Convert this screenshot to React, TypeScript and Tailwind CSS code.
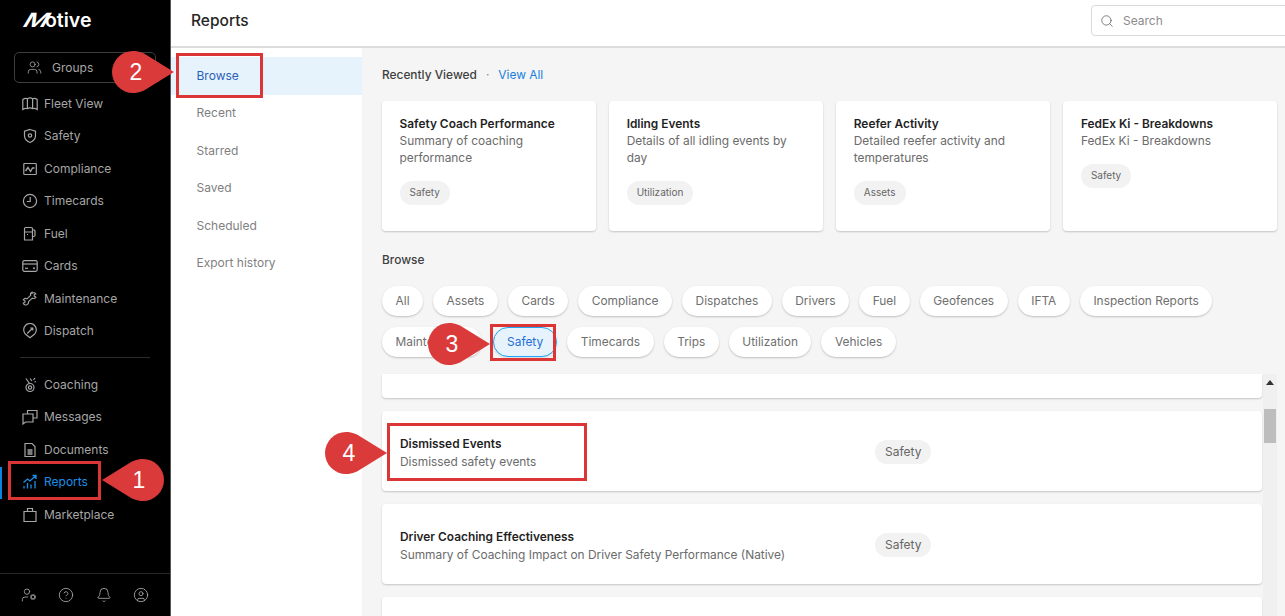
import { Bell, CircleHelp, CircleUser, Search, UserCog, Users } from 'lucide-react';
import type { ReactNode } from 'react';

const Svg = ({ children, w = 1.2 }: { children: ReactNode; w?: number }) => (
  <svg width="16" height="16" viewBox="0 0 16 16" fill="none" stroke="currentColor" strokeWidth={w}>
    {children}
  </svg>
);

const IconMap = () => (
  <Svg>
    <path d="M.8 3.500c1.400-1 3-1.300 4.600-.8 1.700-1 3.500-1 5.200 0 1.600-.5 3.200-.2 4.600.8v10c-1.400-1-3-1.300-4.600-.8-1.700-1-3.500-1-5.200 0-1.600-.5-3.200-.2-4.600.8z" />
    <path d="M5.400 2.700v10M10.600 2.700v10" />
  </Svg>
);

const IconShield = () => (
  <Svg>
    <path d="M8 1.500 13.500 3.200v4.600c0 3.200-2.400 5.400-5.500 6.700-3.100-1.300-5.500-3.500-5.500-6.700V3.200z" />
    <circle cx="8" cy="7.500" r="1.700" />
  </Svg>
);

const IconCompliance = () => (
  <Svg>
    <rect x="1.800" y="2.500" width="12.500" height="11" rx=".8" />
    <path d="M3.500 10 6 6.500l2.500 4 2-3.500h2" strokeWidth="1.400" />
  </Svg>
);

const IconClock = () => (
  <Svg>
    <circle cx="8" cy="8" r="6.600" />
    <path d="M8.200 4v4.500H4.800" />
  </Svg>
);

const IconFuel = () => (
  <Svg>
    <path d="M2.500 14V2.800c0-.8.500-1.300 1.300-1.300h5.400c.8 0 1.300.5 1.300 1.300V14z" />
    <path d="M2.500 6h8M5 8.500h1M10.500 10.500h1.300c.8 0 1.200-.5 1.200-1.200V5L11.500 3.500" />
  </Svg>
);

const IconCard = () => (
  <Svg>
    <rect x=".8" y="2.700" width="14.400" height="10.600" rx="1.500" />
    <path d="M.8 6h14.400" />
    <path d="M3 10.300h3" />
    <circle cx="12" cy="10.300" r="1" fill="currentColor" stroke="none" />
  </Svg>
);

const IconWrench = () => (
  <Svg w={1.1}>
    <path d="M10 1.200c-1.300.6-1.800 2-1.300 3.200L4.900 7.800c-1.200-.6-2.800-.3-3.600 1l1.800 1.200-.3 1.500-1.600.5c.5 1.500 2.100 2.300 3.600 1.800 1.300-.5 2-1.800 1.700-3.100l3.800-3.500c1.300.6 2.800.2 3.600-1l-1.800-1.200.3-1.600 1.500-.5c-.6-1.200-2.500-1.500-3.900-.7z" />
  </Svg>
);

const IconDispatch = () => (
  <Svg>
    <path d="M8 14.800 3.300 11A6.300 6.300 0 1 1 12.700 11z" />
    <path d="M5.300 10.500 10.800 5M8.200 5h2.600v2.600" />
  </Svg>
);

const IconCoaching = () => (
  <Svg>
    <circle cx="8" cy="10.500" r="4" />
    <circle cx="8" cy="10.500" r="1.600" />
    <path d="M4 1.500 7.500 6.500M8 1.500l2 2.500M13 1l-1.500 2M12.500 5l1.500-.5" />
  </Svg>
);

const IconMessages = () => (
  <Svg>
    <path d="M5.500 5V1.500h9.500v7.500h-4" />
    <path d="M1 5h10v8H3.500L1 15z" />
  </Svg>
);

const IconDocument = () => (
  <Svg>
    <path d="M3 1.500h7l3 3v10H3z" />
    <path d="M5.500 8h5M5.500 10h5M5.500 12h5" strokeWidth="1.300" />
  </Svg>
);

const IconReports = () => (
  <Svg w={1.3}>
    <path d="M1.500 8.500 5.500 5l2.500 2 5.500-5M10.500 1.500h3.500V5" />
    <path d="M2 14.500v-2.500M5.500 14.500V9M9 14.500v-4M13 14.500V7" />
  </Svg>
);

const IconBag = () => (
  <Svg>
    <path d="M2 4.500h12v10H2z" />
    <path d="M5.500 4.500V1.500h5v3" />
  </Svg>
);

type NavItem = { label: string; icon: ReactNode; active?: boolean };

const mainNav: NavItem[] = [
  { label: 'Fleet View', icon: <IconMap /> },
  { label: 'Safety', icon: <IconShield /> },
  { label: 'Compliance', icon: <IconCompliance /> },
  { label: 'Timecards', icon: <IconClock /> },
  { label: 'Fuel', icon: <IconFuel /> },
  { label: 'Cards', icon: <IconCard /> },
  { label: 'Maintenance', icon: <IconWrench /> },
  { label: 'Dispatch', icon: <IconDispatch /> }
];

const lowerNav: NavItem[] = [
  { label: 'Coaching', icon: <IconCoaching /> },
  { label: 'Messages', icon: <IconMessages /> },
  { label: 'Documents', icon: <IconDocument /> },
  { label: 'Reports', icon: <IconReports />, active: true },
  { label: 'Marketplace', icon: <IconBag /> }
];

const subNav = ['Browse', 'Recent', 'Starred', 'Saved', 'Scheduled', 'Export history'];

const recent = [
  { title: 'Safety Coach Performance', desc: 'Summary of coaching performance', tag: 'Safety' },
  { title: 'Idling Events', desc: 'Details of all idling events by day', tag: 'Utilization' },
  { title: 'Reefer Activity', desc: 'Detailed reefer activity and temperatures', tag: 'Assets' },
  { title: 'FedEx Ki - Breakdowns', desc: 'FedEx Ki - Breakdowns', tag: 'Safety' }
];

const row1 = ['All', 'Assets', 'Cards', 'Compliance', 'Dispatches', 'Drivers', 'Fuel', 'Geofences', 'IFTA', 'Inspection Reports'];
const row2 = ['Maintenance', 'Safety', 'Timecards', 'Trips', 'Utilization', 'Vehicles'];

const SideLink = ({ item }: { item: NavItem }) => (
  <div className="relative flex h-[32.5px] items-center gap-[6px] pl-[22px]">
    {item.active && <div className="absolute left-0 top-[1px] h-[32px] w-[2px] bg-[#0a84e0]" />}
    <span className={item.active ? 'text-[#1b8fe8]' : 'text-[#a6a6a6]'}>{item.icon}</span>
    <span className={`text-[12px] ${item.active ? 'text-[#1b8fe8]' : 'text-[#a6a6a6]'}`}>{item.label}</span>
  </div>
);

const Pill = ({ label }: { label: string }) => {
  if (label === 'Safety') {
    return (
      <div className="ml-[1.500px] flex h-[30px] items-center rounded-full border border-[#1ea7f5] bg-[#e6f3fd] px-[13px] text-[11.900px] text-[#1f6fd6] shadow-sm">
        {label}
      </div>
    );
  }
  return (
    <div className="flex h-[30px] items-center rounded-full bg-white px-[13.550px] text-[11.900px] text-[#6f6f6f] shadow-[0_1px_2px_rgba(0,0,0,0.22)]">
      {label}
    </div>
  );
};

const Tag = ({ label }: { label: string }) => (
  <span className="inline-flex h-[24px] items-center rounded-full bg-[#f2f2f2] px-[10px] text-[10px] text-[#666666]">{label}</span>
);

const ReportRow = ({ title, desc }: { title: string; desc: string }) => (
  <div className="flex h-[80px] shrink-0 items-center rounded-[4px] bg-white pl-[18px] shadow-[0_1px_2px_rgba(0,0,0,0.2)]">
    <div className="w-[475px] pt-[4px]">
      <div className="text-[11.900px] font-semibold leading-[18px] text-[#1f1f1f]">{title}</div>
      <div className="text-[11.900px] leading-[18px] text-[#6b6b6b]">{desc}</div>
    </div>
    <span className="mt-[2px] inline-flex h-[24px] items-center rounded-full bg-[#f2f2f2] px-[10px] text-[12px] text-[#666666]">Safety</span>
  </div>
);

const Callout = ({ num, x, y }: { num: string; x: number; y: number }) => (
  // circle with a point on one side, x/y is the tip
  <svg className="absolute" style={{ left: num === '1' ? x : x - 62, top: y - 22 }} width="62" height="44" viewBox="0 0 62 44">
    {num === '1' ? (
      <path d="M0 22 30 3.500C35 1.500 38 1 41 1a21 21 0 0 1 0 42c-3 0-6-.5-11-2.500z" fill="#db3a3a" />
    ) : (
      <path d="M62 22 32 3.500C27 1.500 24 1 21 1a21 21 0 0 0 0 42c3 0 6-.5 11-2.500z" fill="#db3a3a" />
    )}
    <text x={num === '1' ? 37 : 24} y="30" fill="#ffffff" fontSize="23" textAnchor="middle" fontFamily="Liberation Sans, sans-serif">
      {num}
    </text>
  </svg>
);

export default function App() {
  return (
    <div className="relative flex h-[616px] w-[1285px] overflow-hidden bg-[#f5f5f5] font-['Inter',sans-serif]">
      <aside className="flex w-[171px] shrink-0 flex-col border-r border-[#555555] bg-black">
        <div className="flex h-[32px] items-end pl-[18px] text-[19.500px] font-semibold leading-[24px] text-white">
          <span className="inline-block w-[27px] origin-bottom-left -skew-x-[24deg] scale-x-[1.35] font-semibold">M</span>
          <span>otive</span>
        </div>
        <div className="mx-[14px] mt-[20px] flex h-[31px] items-center gap-[10px] rounded-[5px] border border-[#3d3d3d] pl-[12px] text-[12px] text-[#a6a6a6]">
          <Users size={15} strokeWidth={1.3} />
          <span>Groups</span>
        </div>
        <div className="mt-[4.500px]">
          {mainNav.map((item) => (
            <SideLink key={item.label} item={item} />
          ))}
        </div>
        <div className="mx-[20px] my-[9.500px] border-t border-[#2c2c2c]" />
        <div className="mt-[1px]">
          {lowerNav.map((item) => (
            <SideLink key={item.label} item={item} />
          ))}
        </div>
        <div className="mt-auto flex h-[43px] items-center gap-[21.300px] border-t border-[#262626] pl-[21px] text-[#a6a6a6]">
          <UserCog size={16} strokeWidth={1.3} />
          <CircleHelp size={16} strokeWidth={1.3} />
          <Bell size={16} strokeWidth={1.3} />
          <CircleUser size={16} strokeWidth={1.3} />
        </div>
      </aside>

      <div className="flex min-w-0 flex-1 flex-col">
        <header className="flex h-[48px] shrink-0 items-start justify-between border-b-2 border-[#dcdcdc] bg-white pl-[20px]">
          <h1 className="mt-[11px] text-[15.500px] font-medium leading-[20px] text-[#262626]">Reports</h1>
          <div className="mr-[-1px] mt-[5px] flex h-[31px] w-[195px] items-center gap-[9px] rounded-l-[4px] border border-[#dadada] pl-[8px] text-[12px] text-[#8c8c8c]">
            <Search size={14} strokeWidth={1.4} className="text-[#666666]" />
            <span>Search</span>
          </div>
        </header>

        <div className="flex min-h-0 flex-1">
          <nav className="w-[191px] shrink-0 bg-white pt-[9px]">
            {subNav.map((name, i) => (
              <div
                key={name}
                className={`flex h-[37.500px] items-center pl-[25.500px] text-[12px] ${i === 0 ? 'bg-[#e6f3fd] text-[#2b5fb8]' : 'text-[#7f7f7f]'}`}
              >
                {name}
              </div>
            ))}
          </nav>

          <main className="flex min-w-0 flex-1 flex-col pl-[20px] pr-[8px]">
            <div className="flex h-[53px] shrink-0 items-center gap-[9px] pt-[1px] text-[11.900px]">
              <span className="font-medium text-[#404040]">Recently Viewed</span>
              <span className="text-[#8c8c8c]">·</span>
              <span className="text-[#1a7fe0]">View All</span>
            </div>
            <div className="grid h-[130px] shrink-0 grid-cols-4 gap-[13.500px]">
              {recent.map((card) => (
                <div key={card.title} className="flex flex-col items-start rounded-[4px] bg-white px-[17.500px] pt-[14px] shadow-[0_1px_2px_rgba(0,0,0,0.2)]">
                  <div className="text-[11.900px] font-semibold leading-[17px] text-[#1f1f1f]">{card.title}</div>
                  <div className="text-[11.900px] leading-[17px] text-[#6b6b6b]">{card.desc}</div>
                  <div className="mt-[12px]">
                    <Tag label={card.tag} />
                  </div>
                </div>
              ))}
            </div>

            <div className="mt-[20px] text-[11.900px] font-medium leading-[18px] text-[#404040]">Browse</div>
            <div className="mt-[16.500px] flex gap-[10px]">
              {row1.map((p) => (
                <Pill key={p} label={p} />
              ))}
            </div>
            <div className="mt-[11px] flex gap-[10px]">
              {row2.map((p) => (
                <Pill key={p} label={p} />
              ))}
            </div>

            <div className="mt-[17.500px] flex min-h-0 flex-1">
              <div className="flex w-[880px] flex-col gap-[13px]">
                <div className="h-[24px] shrink-0 rounded-b-[4px] bg-white shadow-[0_1px_2px_rgba(0,0,0,0.2)]" />
                <ReportRow title="Dismissed Events" desc="Dismissed safety events" />
                <ReportRow title="Driver Coaching Effectiveness" desc="Summary of Coaching Impact on Driver Safety Performance (Native)" />
                <div className="h-[80px] shrink-0 rounded-[4px] bg-white shadow-[0_1px_2px_rgba(0,0,0,0.2)]" />
              </div>
              <div className="relative ml-[1px] w-[14px] bg-[#f0f0f0]">
                <div className="absolute left-[3px] top-[6px] h-0 w-0 border-x-[4px] border-b-[5px] border-x-transparent border-b-[#333333]" />
                <div className="absolute left-[1px] top-[35px] h-[34px] w-[12px] bg-[#bdbdbd]" />
              </div>
            </div>
          </main>
        </div>
      </div>

      {/* tutorial annotations on top of the screenshot */}
      <div className="absolute left-[8px] top-[461px] h-[39px] w-[93px] border-[3px] border-[#dc3535]" />
      <div className="absolute left-[176px] top-[53px] h-[45px] w-[87px] border-[3px] border-[#dc3535]" />
      <div className="absolute left-[490px] top-[324px] h-[37px] w-[66px] border-[3px] border-[#dc3535]" />
      <div className="absolute left-[387px] top-[423px] h-[58px] w-[200px] border-[3px] border-[#dc3535]" />
      <Callout num="1" x={102} y={480} />
      <Callout num="2" x={174} y={72} />
      <Callout num="3" x={490} y={344} />
      <Callout num="4" x={387} y={453} />
    </div>
  );
}
